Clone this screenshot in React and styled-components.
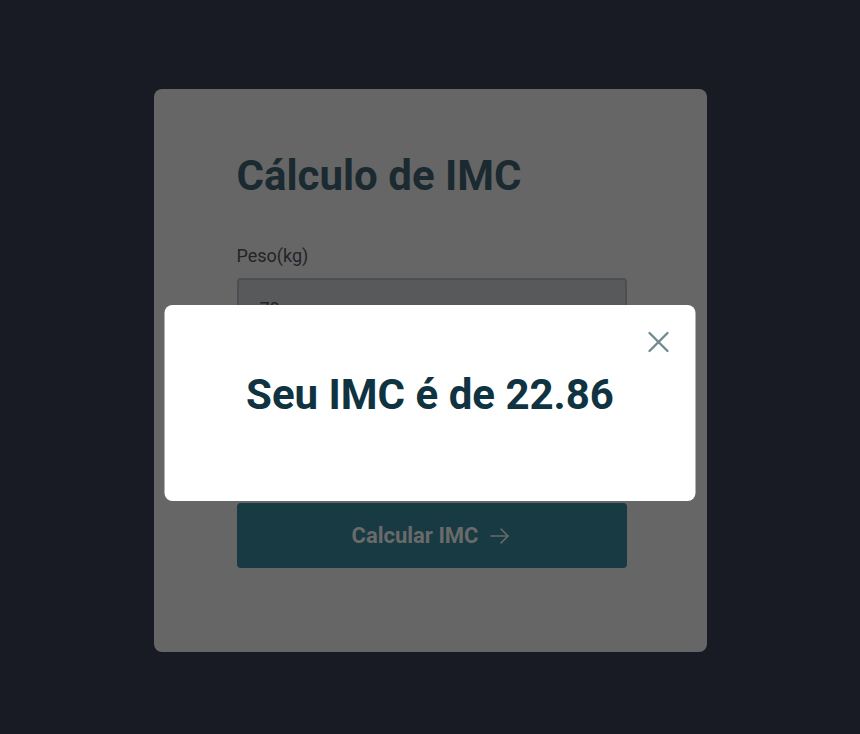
import React from "react";
import styled, { createGlobalStyle } from "styled-components";

const Global = createGlobalStyle`
  html, body { margin: 0; padding: 0; background: #181b23; }
  body { font-family: Roboto, "Liberation Sans", sans-serif; }
  * { box-sizing: border-box; }
`;

const Page = styled.div`
  min-height: 734px;
  display: flex;
  justify-content: center;
  padding-top: 89px;
  position: relative;
`;

const Card = styled.form`
  width: 553px;
  height: 563px;
  background: #666666;
  border-radius: 8px;
  padding: 63px 80px 84px 83px;
  display: flex;
  flex-direction: column;
`;

const Title = styled.h1`
  margin: 0 0 45px;
  font-size: 42px;
  line-height: 48px;
  font-weight: 700;
  color: #1b2a31;
`;

const Field = styled.div`
  display: flex;
  flex-direction: column;
  gap: 12px;
  margin-bottom: 24px;
`;

const Label = styled.label`
  font-size: 18px;
  line-height: 21px;
  color: #222426;
`;

const Input = styled.input`
  height: 60px;
  width: 390px;
  background: #58595b;
  border: 2px solid #4c4e51;
  border-radius: 4px;
  padding: 0 21px;
  font-family: inherit;
  font-size: 18px;
  color: #222426;
  outline: none;
`;

const Button = styled.button`
  margin-top: auto;
  height: 65px;
  width: 390px;
  border: none;
  border-radius: 4px;
  background: #173a43;
  color: #6a6a6a;
  font-family: inherit;
  font-size: 22px;
  font-weight: 700;
  display: flex;
  align-items: center;
  justify-content: center;
  gap: 11px;
`;

const Modal = styled.div`
  position: absolute;
  top: 305px;
  left: 50%;
  transform: translateX(-50%);
  width: 531px;
  height: 196px;
  background: #ffffff;
  border-radius: 8px;
  display: flex;
  justify-content: center;
  padding-top: 66px;
`;

const ModalTitle = styled.h2`
  margin: 0;
  font-size: 42px;
  line-height: 48px;
  font-weight: 700;
  color: #0f3341;
`;

const Close = styled.button`
  position: absolute;
  top: 24px;
  right: 24px;
  width: 26px;
  height: 26px;
  padding: 0;
  border: none;
  background: transparent;
  display: flex;
  align-items: center;
  justify-content: center;
`;

export default function App() {
  return (
    <>
      <Global />
      <Page>
        <Card onSubmit={(e) => e.preventDefault()}>
          <Title>Cálculo de IMC</Title>
          <Field>
            <Label>Peso(kg)</Label>
            <Input defaultValue="70" />
          </Field>
          <Field>
            <Label>Altura(m)</Label>
            <Input defaultValue="1.75" />
          </Field>
          <Button type="submit">
            Calcular IMC
            <svg width="22" height="22" viewBox="0 0 22 22" fill="none" stroke="#6a6a6a" strokeWidth="1.6" strokeLinecap="round" strokeLinejoin="round">
              <path d="M2 11h17" />
              <path d="M12 4l7 7-7 7" />
            </svg>
          </Button>
        </Card>
        <Modal>
          <ModalTitle>Seu IMC é de 22.86</ModalTitle>
          <Close aria-label="Fechar">
            <svg width="22" height="22" viewBox="0 0 22 22" fill="none" stroke="#6e8a93" strokeWidth="2.4" strokeLinecap="round">
              <path d="M2 2l18 18" />
              <path d="M20 2L2 20" />
            </svg>
          </Close>
        </Modal>
      </Page>
    </>
  );
}
